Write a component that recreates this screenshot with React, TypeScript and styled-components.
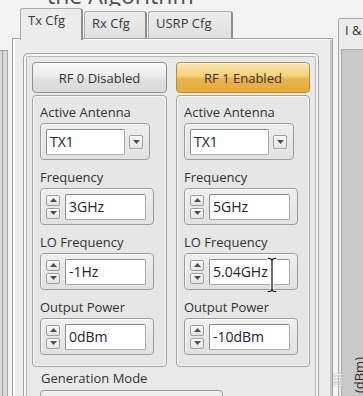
import React from 'react'
import styled, { createGlobalStyle } from 'styled-components'

const GlobalStyle = createGlobalStyle`
  html, body { margin: 0; padding: 0; background: #f3f3f3; }
  body { font-family: "Open Sans", "Liberation Sans", sans-serif; }
`

const Screen = styled.div`
  position: relative;
  width: 363px;
  height: 396px;
  overflow: hidden;
  background: #f3f3f3;
`

const Title = styled.div`
  height: 6px;
  overflow: hidden;
  display: flex;
  align-items: flex-end;
  padding-left: 47px;
  font-size: 23px;
  color: #4e4e4e;
`

const TitleText = styled.span`
  display: block;
  line-height: 24px;
  margin-bottom: -1px;
  white-space: nowrap;
`

const Workspace = styled.div`
  display: flex;
  align-items: flex-start;
  padding-top: 2px;
  height: 388px;
`

const LeftStub = styled.div`
  flex: none;
  width: 8px;
  height: 400px;
  margin-top: 42px;
  margin-right: 4px;
  box-sizing: border-box;
  background: #dadada;
  border-top: 1px solid #9d9d9d;
  border-right: 1px solid #a8a8a8;
  box-shadow: inset 2px 0 0 #dadada, inset 3px 0 0 #a2a2a2;
`

const TabControl = styled.div`
  flex: none;
  width: 321px;
  display: flex;
  flex-direction: column;
`

const TabRow = styled.div`
  display: flex;
  align-items: flex-end;
  gap: 1px;
  height: 30px;
  padding-left: 8px;
`

const Tab = styled.div<{ $active?: boolean; $w: number }>`
  position: relative;
  z-index: ${p => (p.$active ? 2 : 0)};
  width: ${p => p.$w}px;
  height: ${p => (p.$active ? 32 : 27)}px;
  margin-bottom: ${p => (p.$active ? -2 : 0)}px;
  box-sizing: border-box;
  padding: 3px 0 0 7px;
  font-size: 13px;
  line-height: 16px;
  color: #383838;
  background: ${p => (p.$active ? '#ececec' : 'linear-gradient(#ededed, #dfdfdf)')};
  border: 1px solid #aaaaaa;
  border-bottom: none;
  border-right: 2px solid #8e8e8e;
  border-radius: 3px 3px 0 0;
`

const TabPage = styled.div`
  position: relative;
  z-index: 1;
  height: 360px;
  box-sizing: border-box;
  background: #ececec;
  border: 1px solid #9f9f9f;
  border-bottom: none;
  box-shadow: inset 2px 1px 0 #fdfdfd, inset -2px 0 0 #c6c6c6;
  padding: 14px 13px 0 10px;
`

const Frame = styled.div`
  height: 400px;
  box-sizing: border-box;
  background: #e9e9e9;
  border: 1px solid #a3a3a3;
  border-radius: 5px;
  box-shadow: inset 0 0 0 2px #f7f7f7, inset 0 0 0 3px #b7b7b7;
  padding: 8px 8px 0 8px;
`

const Columns = styled.div`
  display: grid;
  grid-template-columns: 135px 134px;
  column-gap: 9px;
`

const Column = styled.div`
  display: flex;
  flex-direction: column;
  gap: 2px;
`

const RFButton = styled.div<{ $on?: boolean }>`
  height: 31px;
  box-sizing: border-box;
  display: flex;
  align-items: center;
  justify-content: center;
  font-size: 13px;
  color: #333;
  border: 1px solid ${p => (p.$on ? '#b88a3a' : '#8f8f8f')};
  border-radius: 4px;
  background: ${p =>
    p.$on
      ? 'linear-gradient(#fbe6ad 0%, #f5d27a 45%, #eab44a 55%, #e7ab3d 100%)'
      : 'linear-gradient(#f8f8f8 0%, #ededed 45%, #e0e0e0 55%, #dadada 100%)'};
  box-shadow: inset 0 1px 0 rgba(255, 255, 255, 0.8);
`

const SubPanel = styled.div`
  display: flex;
  flex-direction: column;
  gap: 9px;
  box-sizing: border-box;
  background: #e6e6e6;
  border: 1px solid #a5a5a5;
  border-radius: 4px;
  box-shadow: inset 0 0 0 1px #f6f6f6;
  padding: 8px 8px 11px 7px;
`

const Group = styled.div`
  display: flex;
  flex-direction: column;
  gap: 3px;
`

const Label = styled.div`
  font-size: 13px;
  line-height: 16px;
  color: #333;
  white-space: nowrap;
`

const ControlShell = styled.div<{ $w: number }>`
  width: ${p => p.$w}px;
  height: 37px;
  box-sizing: border-box;
  display: flex;
  align-items: center;
  gap: 4px;
  padding-left: 5px;
  border: 1px solid #9b9b9b;
  border-radius: 4px;
  background: linear-gradient(#efefef, #e1e1e1);
  box-shadow: inset 0 1px 0 #fbfbfb, inset 1px 0 0 #f6f6f6;
`

const TextField = styled.div<{ $w: number }>`
  position: relative;
  width: ${p => p.$w}px;
  height: 26px;
  box-sizing: border-box;
  display: flex;
  align-items: center;
  padding-left: 3px;
  font-size: 14px;
  color: #1e2236;
  background: #fff;
  border: 1px solid #a9a9a9;
  border-top-color: #8d8d8d;
  border-left-color: #8d8d8d;
  border-radius: 2px;
`

const SmallButton = styled.div<{ $h: number }>`
  width: 14px;
  height: ${p => p.$h}px;
  box-sizing: border-box;
  display: flex;
  align-items: center;
  justify-content: center;
  border: 1px solid #9d9d9d;
  border-radius: 2px;
  background: linear-gradient(#fbfbfb, #e3e3e3);
`

const SpinStack = styled.div`
  display: flex;
  flex-direction: column;
  gap: 2px;
  margin-right: 1px;
`

const WideLabel = styled(Label)`
  margin: 3px 0 4px 9px;
`

const WideBox = styled.div`
  width: 183px;
  height: 30px;
  margin-left: 8px;
  box-sizing: border-box;
  border: 1px solid #9b9b9b;
  border-radius: 4px;
  background: linear-gradient(#efefef, #e1e1e1);
`

const RightStub = styled.div`
  flex: 1;
  margin-left: 5px;
  padding-top: 10px;
  display: flex;
  flex-direction: column;
`

const RightTab = styled.div`
  width: 40px;
  height: 24px;
  box-sizing: border-box;
  padding: 3px 0 0 6px;
  font-size: 13px;
  line-height: 16px;
  color: #3a3326;
  white-space: nowrap;
  overflow: hidden;
  background: #ececec;
  border: 1px solid #aaaaaa;
  border-bottom: none;
  border-radius: 3px 0 0 0;
`

const RightPage = styled.div`
  height: 400px;
  background: #ececec;
  border-left: 1px solid #a8a8a8;
  padding: 7px 0 0 2px;
`

const GraphBox = styled.div`
  height: 400px;
  background: #c9c9c9;
  border: 1px solid #a9a9a9;
  border-right: none;
`

const AxisLabel = styled.div`
  position: absolute;
  left: 352px;
  top: 357px;
  writing-mode: vertical-rl;
  transform: rotate(180deg);
  font-size: 13px;
  line-height: 14px;
  color: #2d2d2d;
  white-space: nowrap;
`

const Watermark = styled.div`
  position: absolute;
  left: 248px;
  top: 369px;
  font-family: "Noto Sans", "Noto Sans CJK SC", sans-serif;
  font-size: 14px;
  color: rgba(255, 255, 255, 0.88);
  text-shadow: 0 0 1px rgba(0, 0, 0, 0.55);
  white-space: nowrap;
`

const Cursor = styled.svg`
  position: absolute;
  left: 56px;
  top: -3px;
`

const Arrow = ({ up }: { up?: boolean }) => (
  <svg width="7" height="4" viewBox="0 0 7 4">
    <path d={up ? 'M0 4 L3.5 0 L7 4 Z' : 'M0 0 L3.5 4 L7 0 Z'} fill="#4d4d4d" />
  </svg>
)

const IBeam = () => (
  <Cursor width="12" height="36" viewBox="0 0 12 36">
    <g fill="none" strokeLinecap="round">
      <path d="M2 1.5 Q6 1 6 4.5 Q6 1 10 1.5 M6 4.5 V31.5 M2 34.5 Q6 35 6 31.5 Q6 35 10 34.5" stroke="#fff" strokeWidth="3" />
      <path d="M2 1.5 Q6 1 6 4.5 Q6 1 10 1.5 M6 4.5 V31.5 M2 34.5 Q6 35 6 31.5 Q6 35 10 34.5" stroke="#111" strokeWidth="1.2" />
    </g>
  </Cursor>
)

const Combo = ({ value, w, fw }: { value: string; w: number; fw: number }) => (
  <ControlShell $w={w}>
    <TextField $w={fw}>{value}</TextField>
    <SmallButton $h={14}>
      <Arrow />
    </SmallButton>
  </ControlShell>
)

const Spin = ({ value, w, fw, cursor }: { value: string; w: number; fw: number; cursor?: boolean }) => (
  <ControlShell $w={w}>
    <SpinStack>
      <SmallButton $h={11}>
        <Arrow up />
      </SmallButton>
      <SmallButton $h={11}>
        <Arrow />
      </SmallButton>
    </SpinStack>
    <TextField $w={fw}>
      {value}
      {cursor && <IBeam />}
    </TextField>
  </ControlShell>
)

type Channel = {
  name: string
  on: boolean
  freq: string
  lo: string
  power: string
}

const channels: Channel[] = [
  { name: 'RF 0 Disabled', on: false, freq: '3GHz', lo: '-1Hz', power: '0dBm' },
  { name: 'RF 1 Enabled', on: true, freq: '5GHz', lo: '5.04GHz', power: '-10dBm' },
]

const App = () => (
  <Screen>
    <GlobalStyle />
    <Title>
      <TitleText>the Algorithm</TitleText>
    </Title>
    <Workspace>
      <LeftStub />
      <TabControl>
        <TabRow>
          <Tab $active $w={63}>Tx Cfg</Tab>
          <Tab $w={63}>Rx Cfg</Tab>
          <Tab $w={85}>USRP Cfg</Tab>
        </TabRow>
        <TabPage>
          <Frame>
            <Columns>
              {channels.map(ch => (
                <Column key={ch.name}>
                  <RFButton $on={ch.on}>{ch.name}</RFButton>
                  <SubPanel>
                    <Group>
                      <Label>Active Antenna</Label>
                      <Combo value="TX1" w={110} fw={79} />
                    </Group>
                    <Group>
                      <Label>Frequency</Label>
                      <Spin value={ch.freq} w={114} fw={81} />
                    </Group>
                    <Group>
                      <Label>LO Frequency</Label>
                      <Spin value={ch.lo} w={114} fw={81} cursor={ch.on} />
                    </Group>
                    <Group>
                      <Label>Output Power</Label>
                      <Spin value={ch.power} w={114} fw={81} />
                    </Group>
                  </SubPanel>
                </Column>
              ))}
            </Columns>
            <WideLabel>Generation Mode</WideLabel>
            <WideBox />
          </Frame>
        </TabPage>
      </TabControl>
      <RightStub>
        <RightTab>I &amp; Q</RightTab>
        <RightPage>
          <GraphBox />
        </RightPage>
      </RightStub>
    </Workspace>
    <AxisLabel>Power (dBm)</AxisLabel>
    <Watermark>CSDN @尤诗茵</Watermark>
  </Screen>
)

export default App
